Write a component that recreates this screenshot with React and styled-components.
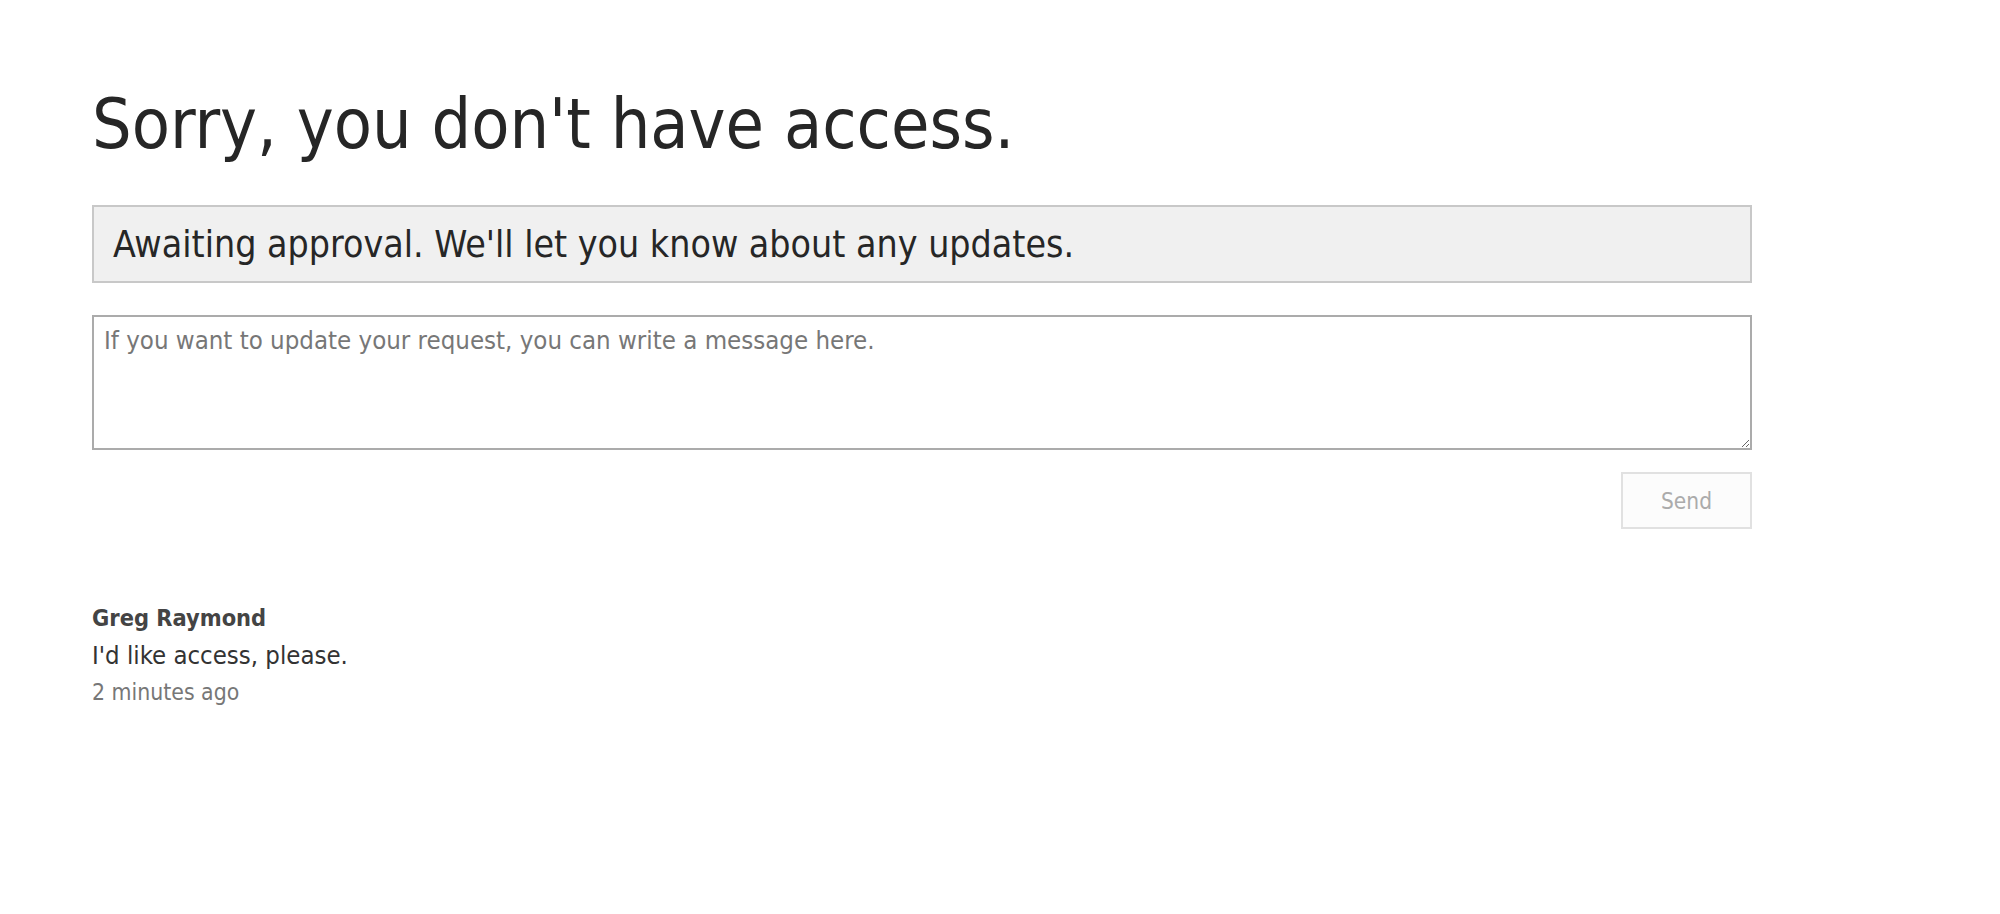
import React from "react";
import styled, { createGlobalStyle } from "styled-components";

const Global = createGlobalStyle`
  html, body { margin: 0; padding: 0; background: #ffffff; }
  body { font-family: "DejaVu Sans", Tahoma, sans-serif; font-stretch: condensed; color: #262626; }
`;

const Page = styled.main`
  padding: 79px 248px 0 92px;
  display: flex;
  flex-direction: column;
`;

const Title = styled.h1`
  margin: 0;
  font-size: 69.5px;
  font-weight: 400;
  line-height: 90px;
  color: #262626;
`;

const Status = styled.div`
  margin-top: 36px;
  height: 78px;
  box-sizing: border-box;
  display: flex;
  align-items: center;
  padding: 0 19px;
  background: #f0f0f0;
  border: 2px solid #c8c8c8;
  font-size: 37.2px;
  color: #262626;
`;

const Message = styled.textarea`
  margin-top: 32px;
  height: 135px;
  box-sizing: border-box;
  border: 2px solid #ababab;
  padding: 7px 10px;
  font-family: inherit;
  font-stretch: condensed;
  font-size: 25.6px;
  line-height: 32px;
  color: #262626;
  resize: vertical;
  outline: none;
  &::placeholder { color: #777777; }
`;

const Actions = styled.div`
  display: flex;
  justify-content: flex-end;
  margin-top: 22px;
`;

const SendButton = styled.button`
  width: 131px;
  height: 57px;
  box-sizing: border-box;
  background: #fcfcfc;
  border: 2px solid #e1e1e1;
  color: #ababab;
  font-family: inherit;
  font-stretch: condensed;
  font-size: 22.5px;
  cursor: default;
`;

const Comment = styled.section`
  margin-top: 71px;
  display: flex;
  flex-direction: column;
`;

const Author = styled.div`
  font-weight: 700;
  font-size: 23.4px;
  line-height: 36px;
  color: #444444;
`;

const Body = styled.div`
  font-size: 25.5px;
  line-height: 38px;
  color: #333333;
`;

const Time = styled.div`
  font-size: 22.8px;
  line-height: 36px;
  color: #777777;
`;

export default function App() {
  return (
    <>
      <Global />
      <Page>
        <Title>Sorry, you don't have access.</Title>
        <Status>Awaiting approval. We'll let you know about any updates.</Status>
        <Message placeholder="If you want to update your request, you can write a message here." />
        <Actions>
          <SendButton disabled>Send</SendButton>
        </Actions>
        <Comment>
          <Author>Greg Raymond</Author>
          <Body>I'd like access, please.</Body>
          <Time>2 minutes ago</Time>
        </Comment>
      </Page>
    </>
  );
}
